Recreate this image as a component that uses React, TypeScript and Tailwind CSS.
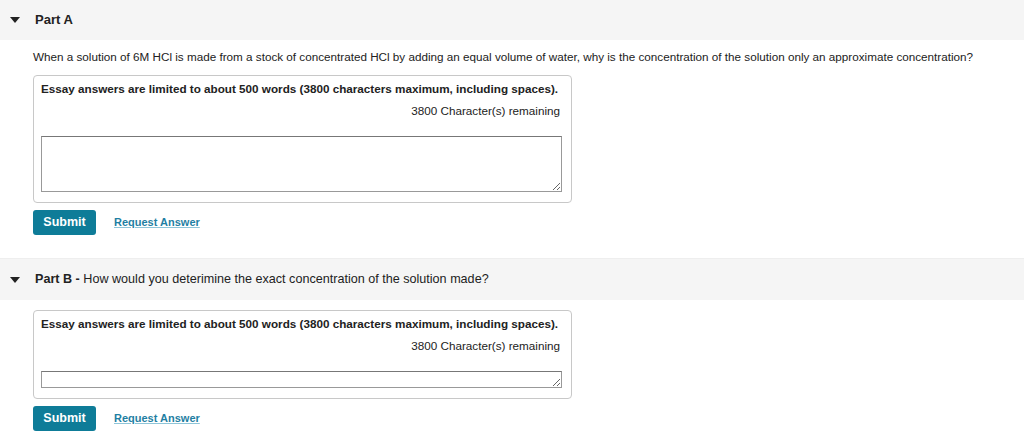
const font = { fontFamily: '"Liberation Sans", Arial, sans-serif' };

function Caret() {
  return (
    <svg width="10" height="6" viewBox="0 0 10 6" className="shrink-0">
      <path d="M0 0 L10 0 L5 6 Z" fill="#222" />
    </svg>
  );
}

function EssayBox({ rows }: { rows: "tall" | "short" }) {
  return (
    <div className="w-[539px] rounded-[4px] border border-[#c8c8c8] pt-[6px] pb-[10px] pl-[7px] pr-[10px]">
      <p className="whitespace-nowrap text-[11.7px] leading-[14px] font-bold text-[#222]">
        Essay answers are limited to about 500 words (3800 characters maximum, including spaces).
      </p>
      <p className="mt-[8px] text-right pr-[1px] text-[11.7px] leading-[14px] text-[#222]">
        3800 Character(s) remaining
      </p>
      <textarea
        className={
          "block w-[521px] border border-[#999] border-t-[#777] bg-white resize-y " +
          (rows === "tall" ? "mt-[18px] h-[56px]" : "mt-[18px] h-[17px]")
        }
      />
    </div>
  );
}

function Actions() {
  return (
    <div className="flex items-center gap-[18px]">
      <button className="h-[25px] w-[63px] rounded-[3px] bg-[#0e7c98] text-white text-[12.5px] font-bold">
        Submit
      </button>
      <a href="#" className="text-[11px] font-bold text-[#1f7fa3] underline decoration-[#8ec5d8]">
        Request Answer
      </a>
    </div>
  );
}

export default function App() {
  return (
    <div className="w-[1024px] h-[435px] bg-white overflow-hidden text-[#222]" style={font}>
      {/* Part A */}
      <div className="h-[40px] bg-[#f5f5f5] flex items-center pl-[10px] gap-[15px]">
        <Caret />
        <span className="text-[13px] font-bold">Part A</span>
      </div>
      <div className="pl-[33px]">
        <p className="mt-[10px] whitespace-nowrap text-[11.7px] leading-[14px]">
          When a solution of 6M HCl is made from a stock of concentrated HCl by adding an equal volume of water, why is the concentration of the solution only an approximate concentration?
        </p>
        <div className="mt-[11px]">
          <EssayBox rows="tall" />
        </div>
        <div className="mt-[7px]">
          <Actions />
        </div>
      </div>

      {/* Part B */}
      <div className="mt-[23px] border-t border-[#eee] h-[42px] bg-[#f5f5f5] flex items-center pl-[10px] gap-[15px]">
        <Caret />
        <span className="text-[12.6px]">
          <span className="font-bold">Part B - </span>How would you deterimine the exact concentration of the solution made?
        </span>
      </div>
      <div className="pl-[33px]">
        <div className="mt-[10px]">
          <EssayBox rows="short" />
        </div>
        <div className="mt-[7px]">
          <Actions />
        </div>
      </div>
    </div>
  );
}
